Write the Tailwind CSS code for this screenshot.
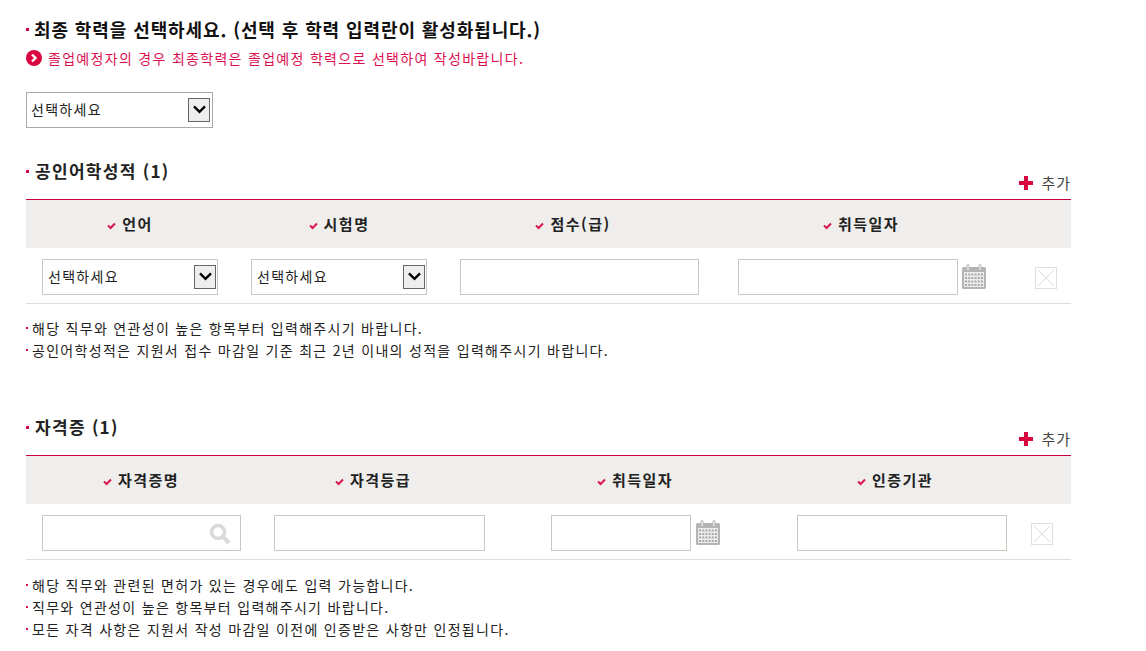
<!DOCTYPE html>
<html lang="ko">
<head>
<meta charset="utf-8">
<script src="https://cdn.jsdelivr.net/npm/@tailwindcss/browser@4"></script>
<title>학력 입력</title>
</head>
<body class="bg-white font-['Noto_Sans_CJK_KR','Noto_Sans',sans-serif] text-[#222]">
<svg class="hidden">
  <symbol id="chk" viewBox="0 0 9 8"><path d="M1 3.500 L3.600 6 L8 1.500" fill="none" stroke="#d9164f" stroke-width="2"/></symbol>
  <symbol id="arr" viewBox="0 0 20 24"><path d="M4 8 L10 14 L16 8" fill="none" stroke="#000" stroke-width="2.600"/></symbol>
  <symbol id="cal" viewBox="0 0 24 25">
    <path d="M1.500 3h21a1.500 1.500 0 0 1 1.500 1.500v19a1.500 1.500 0 0 1-1.500 1.500h-21a1.500 1.500 0 0 1-1.500-1.500v-19a1.500 1.500 0 0 1 1.500-1.500z" fill="#b4b4b4"/>
    <rect x="5" y="0.500" width="2" height="6" rx="1" fill="#fff" stroke="#b4b4b4"/><rect x="17" y="0.500" width="2" height="6" rx="1" fill="#fff" stroke="#b4b4b4"/>
    <rect x="2" y="8" width="20" height="15" fill="#ececec"/>
    <path d="M3 10.500h18M3 14h18M3 17.500h18M3 21h18" stroke="#aaaaaa" stroke-width="2" stroke-dasharray="2 1.200"/>
  </symbol>
  <symbol id="del" viewBox="0 0 22 22"><rect x=".5" y=".5" width="21" height="21" fill="#fff" stroke="#e3dfd7"/><path d="M3 3 L19 19 M19 3 L3 19" stroke="#dedbd6" stroke-width="1"/></symbol>
  <symbol id="plus" viewBox="0 0 14 14"><path d="M7 0v14M0 7h14" stroke="#d9073f" stroke-width="4"/></symbol>
</svg>

<main class="w-[1071px] pl-[26px] pt-[16px]">
  <h2 class="flex items-center h-[26px] text-[18px] font-bold text-[#111] tracking-[0.9px]">
    <span class="w-[3px] h-[3px] bg-[#d9073f] mr-[5px]"></span>최종 학력을 선택하세요. (선택 후 학력 입력란이 활성화됩니다.)
  </h2>
  <p class="flex items-center mt-[3px] h-[26px] text-[14px] tracking-[1.3px] text-[#dc0f50]">
    <svg class="w-[16px] h-[16px] mr-[6px]" viewBox="0 0 16 16"><circle cx="8" cy="8" r="8" fill="#d9073f"/><path d="M6 4.500 L9.500 8 L6 11.500" fill="none" stroke="#fff" stroke-width="2.400"/></svg>졸업예정자의 경우 최종학력은 졸업예정 학력으로 선택하여 작성바랍니다.
  </p>
  <div class="relative mt-[21px] w-[187px] h-[36px]">
    <select class="appearance-none w-full h-full border border-[#aaa] pl-[4px] pb-[1px] text-[14px] tracking-[1.3px] text-[#222] bg-white"><option>선택하세요</option></select>
    <span class="absolute right-[3px] top-[6px] w-[22px] h-[24px] border border-[#666] bg-[#eee] flex items-center justify-center"><svg class="w-[19px] h-[22px]"><use href="#arr"/></svg></span>
  </div>

  <section class="mt-[29px]">
    <div class="flex items-start justify-between h-[42px]">
      <h3 class="flex items-center h-[28px] text-[17px] font-bold tracking-[1.3px] text-[#222]"><span class="w-[3px] h-[3px] bg-[#d9073f] mr-[6px]"></span>공인어학성적 (1)</h3>
      <span class="flex items-center mt-[14px] h-[24px] text-[15px] tracking-[1px] text-[#444]"><svg class="w-[14px] h-[14px] mr-[8px]"><use href="#plus"/></svg>추가</span>
    </div>
    <div class="border-t border-[#c4003f]">
      <div class="grid grid-cols-[208px_210px_258px_318px_51px] h-[48px] bg-[#efeeec] items-center text-center text-[15px] font-bold tracking-[1.5px] text-[#222]">
        <div><svg class="inline w-[9px] h-[8px] mr-[6px]"><use href="#chk"/></svg>언어</div>
        <div><svg class="inline w-[9px] h-[8px] mr-[6px]"><use href="#chk"/></svg>시험명</div>
        <div><svg class="inline w-[9px] h-[8px] mr-[6px]"><use href="#chk"/></svg>점수(급)</div>
        <div><svg class="inline w-[9px] h-[8px] mr-[6px]"><use href="#chk"/></svg>취득일자</div>
        <div></div>
      </div>
      <div class="grid grid-cols-[208px_210px_258px_318px_51px] h-[56px] pt-[2px] items-center border-b border-[#e0dcd6]">
        <div class="pl-[16px]">
          <div class="relative w-[176px] h-[36px]">
            <select class="appearance-none w-full h-full border border-[#cdc8bf] pl-[5px] text-[14px] tracking-[1.3px] text-[#222] bg-white"><option>선택하세요</option></select>
            <span class="absolute right-[2px] top-[6px] w-[22px] h-[24px] border border-[#666] bg-[#eee] flex items-center justify-center"><svg class="w-[19px] h-[22px]"><use href="#arr"/></svg></span>
          </div>
        </div>
        <div class="pl-[17px]">
          <div class="relative w-[176px] h-[36px]">
            <select class="appearance-none w-full h-full border border-[#cdc8bf] pl-[5px] text-[14px] tracking-[1.3px] text-[#222] bg-white"><option>선택하세요</option></select>
            <span class="absolute right-[2px] top-[6px] w-[22px] h-[24px] border border-[#666] bg-[#eee] flex items-center justify-center"><svg class="w-[19px] h-[22px]"><use href="#arr"/></svg></span>
          </div>
        </div>
        <div class="pl-[16px]"><input class="block w-[239px] h-[36px] border border-[#cdc8bf]"></div>
        <div class="pl-[36px] flex items-center">
          <input class="block w-[220px] h-[36px] border border-[#cdc8bf]">
          <svg class="w-[24px] h-[25px] ml-[4px]"><use href="#cal"/></svg>
        </div>
        <div class="pl-[15px] pt-[2px]"><svg class="w-[22px] h-[22px]"><use href="#del"/></svg></div>
      </div>
    </div>
    <ul class="mt-[13px] text-[14px] tracking-[1.3px] leading-[22px] text-[#222]">
      <li class="flex items-center"><span class="w-[2px] h-[2px] bg-[#d9073f] mr-[4px]"></span>해당 직무와 연관성이 높은 항목부터 입력해주시기 바랍니다.</li>
      <li class="flex items-center"><span class="w-[2px] h-[2px] bg-[#d9073f] mr-[4px]"></span>공인어학성적은 지원서 접수 마감일 기준 최근 2년 이내의 성적을 입력해주시기 바랍니다.</li>
    </ul>
  </section>

  <section class="mt-[52px]">
    <div class="flex items-start justify-between h-[42px]">
      <h3 class="flex items-center h-[28px] text-[17px] font-bold tracking-[1.3px] text-[#222]"><span class="w-[3px] h-[3px] bg-[#d9073f] mr-[6px]"></span>자격증 (1)</h3>
      <span class="flex items-center mt-[14px] h-[24px] text-[15px] tracking-[1px] text-[#444]"><svg class="w-[14px] h-[14px] mr-[8px]"><use href="#plus"/></svg>추가</span>
    </div>
    <div class="border-t border-[#c4003f]">
      <div class="grid grid-cols-[230px_234px_290px_230px_61px] h-[48px] bg-[#efeeec] items-center text-center text-[15px] font-bold tracking-[1.5px] text-[#222]">
        <div><svg class="inline w-[9px] h-[8px] mr-[6px]"><use href="#chk"/></svg>자격증명</div>
        <div><svg class="inline w-[9px] h-[8px] mr-[6px]"><use href="#chk"/></svg>자격등급</div>
        <div><svg class="inline w-[9px] h-[8px] mr-[6px]"><use href="#chk"/></svg>취득일자</div>
        <div><svg class="inline w-[9px] h-[8px] mr-[6px]"><use href="#chk"/></svg>인증기관</div>
        <div></div>
      </div>
      <div class="grid grid-cols-[230px_234px_290px_230px_61px] h-[56px] pt-[2px] items-center border-b border-[#e0dcd6]">
        <div class="pl-[16px]">
          <div class="relative w-[199px] h-[36px]">
            <input class="block w-full h-full border border-[#cdc8bf]">
            <svg class="absolute right-[10px] top-[8px] w-[22px] h-[22px]" viewBox="0 0 22 22"><circle cx="9" cy="9" r="6.500" fill="none" stroke="#ddd8d8" stroke-width="3.500"/><path d="M14 14 L20 20" stroke="#dcdad6" stroke-width="4"/></svg>
          </div>
        </div>
        <div class="pl-[18px]"><input class="block w-[211px] h-[36px] border border-[#cdc8bf]"></div>
        <div class="pl-[61px] flex items-center">
          <input class="block w-[140px] h-[36px] border border-[#cdc8bf]">
          <svg class="w-[24px] h-[25px] ml-[5px]"><use href="#cal"/></svg>
        </div>
        <div class="pl-[17px]"><input class="block w-[210px] h-[36px] border border-[#cdc8bf]"></div>
        <div class="pl-[21px] pt-[2px]"><svg class="w-[22px] h-[22px]"><use href="#del"/></svg></div>
      </div>
    </div>
    <ul class="mt-[14px] text-[14px] tracking-[1.3px] leading-[22px] text-[#222]">
      <li class="flex items-center"><span class="w-[2px] h-[2px] bg-[#d9073f] mr-[4px]"></span>해당 직무와 관련된 면허가 있는 경우에도 입력 가능합니다.</li>
      <li class="flex items-center"><span class="w-[2px] h-[2px] bg-[#d9073f] mr-[4px]"></span>직무와 연관성이 높은 항목부터 입력해주시기 바랍니다.</li>
      <li class="flex items-center"><span class="w-[2px] h-[2px] bg-[#d9073f] mr-[4px]"></span>모든 자격 사항은 지원서 작성 마감일 이전에 인증받은 사항만 인정됩니다.</li>
    </ul>
  </section>
</main>
</body>
</html>
